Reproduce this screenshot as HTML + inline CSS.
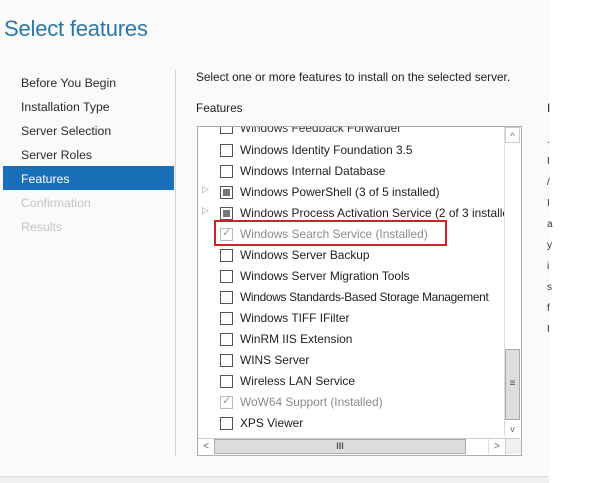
<!DOCTYPE html><html><head><style>
body{margin:0;width:613px;height:482px;background:#fff;position:relative;overflow:hidden;font-family:"Liberation Sans",sans-serif;font-size:12px;color:#1e1e1e}
.a{position:absolute;white-space:nowrap}
#bg{position:absolute;left:0;top:0;width:549px;height:476px;background:#fafafa}
#foot{position:absolute;left:0;top:476px;width:549px;height:6px;background:#f0f0f0;border-top:1px solid #dcdcdc}
.nav{position:absolute;left:21px;font-size:12.3px;color:#2a2a2a}
.cb{position:absolute;left:220px;width:11px;height:11px;border:1px solid #555;background:#fff}
.t{position:absolute;left:240px;font-size:11.9px;color:#1e1e1e;white-space:nowrap;line-height:14px}
</style></head><body>
<div id="bg"></div>
<div class="a" style="left:4px;top:16px;font-size:22px;color:#2a78a8;letter-spacing:-0.2px">Select features</div>
<div class="a" style="left:175px;top:70px;width:1px;height:386px;background:#d5d5d5"></div>
<div class="nav" style="top:76px">Before You Begin</div>
<div class="nav" style="top:100px">Installation Type</div>
<div class="nav" style="top:124px">Server Selection</div>
<div class="nav" style="top:148px">Server Roles</div>
<div class="a" style="left:3px;top:166px;width:171px;height:24px;background:#1a70b8"></div>
<div class="nav" style="top:172px;color:#fff">Features</div>
<div class="nav" style="top:196px;color:#c4c4c4">Confirmation</div>
<div class="nav" style="top:220px;color:#c4c4c4">Results</div>
<div class="a" style="left:196px;top:70px;font-size:11.8px">Select one or more features to install on the selected server.</div>
<div class="a" style="left:196px;top:101px;font-size:11.8px">Features</div>
<div class="a" style="left:197px;top:126px;width:323px;height:328px;border:1px solid #abadb3;background:#fff;overflow:hidden">
</div>
<div class="cb" style="top:121px"></div>
<div class="t" style="top:121px;color:#333">Windows Feedback Forwarder</div>
<div class="a" style="left:198px;top:118px;width:306px;height:9px;background:#fafafa"></div>
<div class="a" style="left:198px;top:126px;width:306px;height:1px;background:#abadb3"></div>
<div class="cb" style="top:144px"></div><div class="t" style="top:143px">Windows Identity Foundation 3.5</div>
<div class="cb" style="top:165px"></div><div class="t" style="top:164px">Windows Internal Database</div>
<div class="a" style="left:202px;top:184px;color:#999;font-size:9px">▷</div>
<div class="cb" style="top:186px"></div><div class="a" style="left:223px;top:189px;width:7px;height:7px;background:#777"></div><div class="t" style="top:185px">Windows PowerShell (3 of 5 installed)</div>
<div class="a" style="left:202px;top:205px;color:#999;font-size:9px">▷</div>
<div class="cb" style="top:207px"></div><div class="a" style="left:223px;top:210px;width:7px;height:7px;background:#777"></div><div class="t" style="top:206px;width:264px;overflow:hidden">Windows Process Activation Service (2 of 3 installed)</div>
<div class="cb" style="top:228px;border-color:#bbb"></div><div class="a" style="left:222px;top:226px;color:#999;font-size:11px">✓</div><div class="t" style="top:227px;color:#8a8a8a">Windows Search Service (Installed)</div>
<div class="a" style="left:214px;top:220px;width:229px;height:22px;border:2px solid #d0202a"></div>
<div class="cb" style="top:249px"></div><div class="t" style="top:248px">Windows Server Backup</div>
<div class="cb" style="top:270px"></div><div class="t" style="top:269px">Windows Server Migration Tools</div>
<div class="cb" style="top:291px"></div><div class="t" style="top:290px;letter-spacing:-0.3px">Windows Standards-Based Storage Management</div>
<div class="cb" style="top:312px"></div><div class="t" style="top:311px">Windows TIFF IFilter</div>
<div class="cb" style="top:333px"></div><div class="t" style="top:332px">WinRM IIS Extension</div>
<div class="cb" style="top:354px"></div><div class="t" style="top:353px">WINS Server</div>
<div class="cb" style="top:375px"></div><div class="t" style="top:374px">Wireless LAN Service</div>
<div class="cb" style="top:396px;border-color:#bbb"></div><div class="a" style="left:222px;top:394px;color:#999;font-size:11px">✓</div><div class="t" style="top:395px;color:#8a8a8a">WoW64 Support (Installed)</div>
<div class="cb" style="top:417px"></div><div class="t" style="top:416px">XPS Viewer</div>
<div class="a" style="left:504px;top:127px;width:16px;height:310px;background:#fff;border-left:1px solid #ddd"></div>
<div class="a" style="left:505px;top:127px;width:15px;height:16px;border:1px solid #ccc;box-sizing:border-box;text-align:center;font-size:9px;color:#666;line-height:16px">^</div>
<div class="a" style="left:505px;top:349px;width:15px;height:71px;background:#ddd;border:1px solid #aaa;box-sizing:border-box;text-align:center;line-height:68px;color:#555;font-size:10px">≡</div>
<div class="a" style="left:505px;top:421px;width:15px;height:16px;text-align:center;font-size:9px;color:#666;line-height:16px">v</div>
<div class="a" style="left:198px;top:438px;width:322px;height:16px;background:#fff;border-top:1px solid #ccc"></div>
<div class="a" style="left:198px;top:439px;width:16px;height:15px;text-align:center;color:#666;line-height:15px;font-size:10px">&lt;</div>
<div class="a" style="left:214px;top:439px;width:252px;height:15px;background:#ddd;border:1px solid #aaa;box-sizing:border-box;text-align:center;line-height:13px;color:#555;font-size:9px;font-weight:bold">III</div>
<div class="a" style="left:488px;top:439px;width:16px;height:15px;text-align:center;color:#666;line-height:15px;font-size:10px;border-left:1px solid #ddd">&gt;</div>
<div class="a" style="left:505px;top:439px;width:15px;height:15px;background:#f0f0f0;border-left:1px solid #ccc"></div>
<div class="a" style="left:547px;top:101px;font-size:12px">I</div>
<div class="a" style="left:547px;top:130px;font-size:10px;line-height:21px;color:#333">.<br>I<br>/<br>I<br>a<br>y<br>i<br>s<br>f<br>I</div>
<div id="foot"></div>
</body></html>
